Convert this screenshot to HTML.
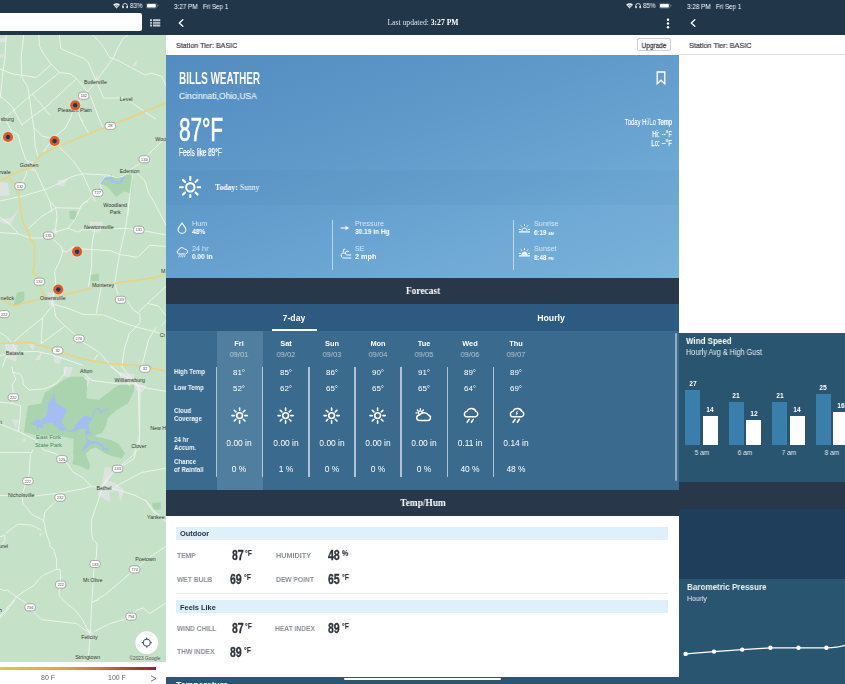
<!DOCTYPE html>
<html><head><meta charset="utf-8"><style>
html,body{margin:0;padding:0;width:845px;height:684px;overflow:hidden;background:#fff;}
.t{position:absolute;line-height:normal;white-space:nowrap;will-change:transform;}
.r{position:absolute;}
svg{position:absolute;}
</style></head><body>
<div class="r" style="left:0.00px;top:0.00px;width:845.00px;height:35.00px;background:#22364a;"></div>
<div class="r" style="left:0.00px;top:35.00px;width:166.00px;height:627.00px;background:#c5e1c7;"></div>
<svg style="left:0;top:35px" width="166" height="627" viewBox="0 35 166 627"><polygon points="26.7,160.5 33,161 35.2,171.4 28,170" fill="#dde3df"/><polygon points="0,182 8,183 9.7,195.7 0,196" fill="#dde3df"/><polygon points="58,180 68,178.7 64,186 58,186" fill="#dde3df"/><polygon points="0,38 6.7,38 6.7,42.3 0,42.3" fill="#dde3df"/><polygon points="0,54.4 3.6,54.4 3.6,57.5 0,57.5" fill="#dde3df"/><polygon points="131.5,66.6 137.6,59.3 136,66" fill="#dde3df"/><polygon points="94.5,80 97,73.8 97.5,80" fill="#dde3df"/><polygon points="19.4,208.3 10.9,218 0,219.2 0,222 9.7,225.3 13,220" fill="#dde3df"/><polygon points="52.2,229 57,229 57,233.8 52.2,233.8" fill="#dde3df"/><polygon points="89,221.6 103.6,222 100,232.6 92,232" fill="#dde3df"/><polygon points="63.1,367 72.8,367 70,376.7 64,376" fill="#dde3df"/><polygon points="47.3,292.5 54.6,292.5 54.6,305.8 49,305.8" fill="#dde3df"/><polygon points="4.9,343.5 18.2,345 16,361.7 6,358" fill="#dde3df"/><polygon points="27.9,343.5 35.2,345 33,350.7" fill="#dde3df"/><polygon points="34,360.5 42.5,350.7 40,360" fill="#dde3df"/><polygon points="53.4,355.6 61.9,357 60,364 54,363" fill="#dde3df"/><polygon points="71.6,343.5 76.5,337.4 76,343.5" fill="#dde3df"/><polygon points="104.8,467 112.1,468.2 107.3,480.3 114.6,482.8 124.3,490 120.6,502.2 118.2,491.3 109.7,491.3 109.7,502.2 97.6,494.9 102.4,481.6" fill="#dde3df"/><polygon points="119.4,371.9 134,374 134,384 121,382" fill="#dde3df"/><polygon points="134,382.8 147.3,386 142,392.5 136,390" fill="#dde3df"/><polygon points="84.2,376.7 90.3,378 88,386.4 84.2,385" fill="#dde3df"/><polygon points="10.9,419.2 19.4,420 16,427.7" fill="#dde3df"/><polygon points="21.8,438.6 26.7,438.6 24,442.2" fill="#dde3df"/><polygon points="38.8,533 43.7,533 40,536.6" fill="#dde3df"/><polygon points="90.4,628.5 94.3,635 90.4,641.3 86.4,635" fill="#dde3df"/><polygon fill="#a9d4ae" points="24.3,430.1 27.9,405.8 41.3,403.4 44.9,392.5 51,388.8 63.1,380.3 70.4,376.7 83,376.7 87,381 86.6,398.6 98.8,399.8 113.3,388.8 120.6,384 134,384 134,391.3 127.9,403.4 116.5,410 108.1,417.5 106.2,425 102.5,432.5 94.1,436.2 110.9,439.9 118.4,443.7 124.9,453 122.1,458.6 110.9,455.8 104.4,453 95.9,447.4 90.3,449.3 85.6,454 90.3,465.2 88.5,469.9 80,466.1 72.5,464.3 73.5,458.6 73.5,439 60.7,436 36.4,435 24.3,432.5"/><polygon points="69.2,211 76.5,210.7 76.5,219.2 70,219" fill="#a9d4ae"/><polygon points="90.3,275 98.8,273.8 98.8,281 91,281" fill="#a9d4ae"/><polygon points="13.3,305.8 17,292.5 24.3,291.3 24.3,300 19.4,304.6" fill="#a9d4ae"/><polygon points="152.2,503 160.7,502.2 160.7,509.5 153,510" fill="#a9d4ae"/><polygon points="72.8,450 83,450 83,465.8 76,462" fill="#a9d4ae"/><polygon fill="#a9d4ae" points="100.7,183.4 105.6,177.8 124,175.6 131.2,174.2 133.3,178.5 131.2,194 124,191.2 116.3,197 107.8,187"/><polygon fill="#a5bdf0" points="30.3,423.4 38.8,418.6 40,420.4 47.3,415.5 48.5,402.2 52.2,398.6 54,390 54.6,398.6 57,403.4 65.5,408.3 66.7,410.7 63.1,418 61.9,422.8 66,428.7 69.7,431.5 74.4,427.8 77.2,422.2 84.7,415.6 92.2,418.4 88.5,425 89.4,430.6 92.2,433.4 87.5,434.3 86.6,438.1 90.3,440.9 97.8,441.8 102.5,444.6 104.4,448.4 108.1,447.4 109,449.3 103.4,450.2 100.6,445.5 95,443.7 89.4,444.6 84.7,450.2 81.9,451.2 82.8,448.4 86.6,442.7 85.6,434.3 85.6,428.7 80,428.7 74.4,431.5 69.7,432.5 66,430 60.7,430.7 57,426.5 52.2,422.8 43.7,424 42.5,428.9 38.8,426.5 37.6,431.3 36.4,425.3 30.3,424"/><polyline fill="none" stroke="#a5bdf0" stroke-width="1.2" stroke-linejoin="round" points="91,419 94.1,412 95.1,409.5 98.8,408.9 101.2,413.1 104.8,409.5 108.5,408.9"/><polyline fill="none" stroke="#a5bdf0" stroke-width="2.4" stroke-linejoin="round" points="100.7,184.2 103.5,178.8 111.3,178.4 112,181.3 120.5,183.2 122,179.2 124.8,177.3"/><polyline fill="none" stroke="#a5bdf0" stroke-width="1.5" points="111.3,174.4 111.3,178.4"/><polyline fill="none" stroke="#f0f4f0" stroke-width="0.9" stroke-linejoin="round" stroke-linecap="round" points="92.7,35 98.8,41.1 103.6,47.1 109.7,57.5 119.4,61.1 131.5,67.8 144.9,75 151,73.2 161.9,76.3 166,86"/><polyline fill="none" stroke="#f0f4f0" stroke-width="0.9" stroke-linejoin="round" stroke-linecap="round" points="127.9,35 123,38.6 115.8,52 113.3,58 95.1,82.3 86.6,93.3 75,105 70.4,118 65.5,127.7 57,135 47.3,146 43.7,152"/><polyline fill="none" stroke="#f0f4f0" stroke-width="0.9" stroke-linejoin="round" stroke-linecap="round" points="59.5,35 60.7,48.3 68,52 83,58 87.9,61.7 96.3,81.1 103.6,98.1 114.6,98.1 123,97.5 131.5,102.4 146.1,112.7 156,119"/><polyline fill="none" stroke="#f0f4f0" stroke-width="0.9" stroke-linejoin="round" stroke-linecap="round" points="38.8,35 39.4,45.9 43.1,53.2 51,64.1 59.5,72.6 70.4,73.8 76.5,78.7 83,86 90.3,95.7 98.8,118 103,127.7"/><polyline fill="none" stroke="#f0f4f0" stroke-width="0.9" stroke-linejoin="round" stroke-linecap="round" points="23.7,35 21.2,56.8 21.8,77.5 27.9,87.2 30.3,103 32.2,118 34,127.7 35.2,145.9 37.6,155.6"/><polyline fill="none" stroke="#f0f4f0" stroke-width="0.9" stroke-linejoin="round" stroke-linecap="round" points="6.1,35 4.9,59.3 3,70.2 1.2,89.6 0,98"/><polyline fill="none" stroke="#f0f4f0" stroke-width="0.9" stroke-linejoin="round" stroke-linecap="round" points="4.9,118 10.9,130.1 18.2,135 20.6,144.7 25.5,159.3 27.9,161.7"/><polyline fill="none" stroke="#f0f4f0" stroke-width="0.9" stroke-linejoin="round" stroke-linecap="round" points="0,122 4.9,118 30.3,95.7 59.5,72.6"/><polyline fill="none" stroke="#f0f4f0" stroke-width="0.9" stroke-linejoin="round" stroke-linecap="round" points="22,125 30.3,118 45,107.8 76.5,78.7"/><polyline fill="none" stroke="#f0f4f0" stroke-width="0.9" stroke-linejoin="round" stroke-linecap="round" points="0,69 12.1,73.8 36.4,77.5 51,64.7"/><polyline fill="none" stroke="#f0f4f0" stroke-width="0.9" stroke-linejoin="round" stroke-linecap="round" points="32.8,94.5 43.7,107.8 50,115"/><polyline fill="none" stroke="#f0f4f0" stroke-width="0.9" stroke-linejoin="round" stroke-linecap="round" points="0,95.7 12.1,106.6 18.2,118 22,125"/><polyline fill="none" stroke="#f0f4f0" stroke-width="0.9" stroke-linejoin="round" stroke-linecap="round" points="34,127.7 42.5,136.2 52.2,138.6"/><polyline fill="none" stroke="#f0f4f0" stroke-width="0.9" stroke-linejoin="round" stroke-linecap="round" points="75,105 83,124 89,133.8"/><polyline fill="none" stroke="#f0f4f0" stroke-width="0.9" stroke-linejoin="round" stroke-linecap="round" points="59.5,147.1 72.8,160.5 83,175 91.5,193.2 95,201"/><polyline fill="none" stroke="#f0f4f0" stroke-width="0.9" stroke-linejoin="round" stroke-linecap="round" points="80.1,118 83,121.6"/><polyline fill="none" stroke="#f0f4f0" stroke-width="0.9" stroke-linejoin="round" stroke-linecap="round" points="26.7,171.4 25.5,176.3 21.8,183.5"/><polyline fill="none" stroke="#f0f4f0" stroke-width="0.9" stroke-linejoin="round" stroke-linecap="round" points="35.2,170.2 38.8,177.5 42.5,186 46.1,193.2 49.8,201 52,212"/><polyline fill="none" stroke="#f0f4f0" stroke-width="0.9" stroke-linejoin="round" stroke-linecap="round" points="0,201 24.3,195.7 48.5,188.4 72.8,176.3 83,173.8 107.3,175 117,177.5 123,176.3 131.5,169 138.8,164.1 148.5,154.4 160.7,142.3 166,138.6"/><polyline fill="none" stroke="#f0f4f0" stroke-width="0.9" stroke-linejoin="round" stroke-linecap="round" points="132.8,175 131.5,183.5 129.1,201 128,215"/><polyline fill="none" stroke="#f0f4f0" stroke-width="0.9" stroke-linejoin="round" stroke-linecap="round" points="136.4,172.6 144.9,181.1 148.5,193.2 153.4,201 166,225.3"/><polyline fill="none" stroke="#f0f4f0" stroke-width="0.9" stroke-linejoin="round" stroke-linecap="round" points="104.8,176.3 100,183.5 101.2,188.4 86.6,201 80,207"/><polyline fill="none" stroke="#f0f4f0" stroke-width="0.9" stroke-linejoin="round" stroke-linecap="round" points="0,232.6 18.2,233.8 30.3,238 43.7,238 53.4,232.6 68,228.3 77.7,232 83,229.8 125.5,228.3 143.7,230.7 166,235"/><polyline fill="none" stroke="#f0f4f0" stroke-width="0.9" stroke-linejoin="round" stroke-linecap="round" points="0,216.8 9.7,224.1 18.2,233.2"/><polyline fill="none" stroke="#f0f4f0" stroke-width="0.9" stroke-linejoin="round" stroke-linecap="round" points="27.9,228.9 41.3,216.8 55.8,207.7 80.1,208.3 83,203.4 87.9,201"/><polyline fill="none" stroke="#f0f4f0" stroke-width="0.9" stroke-linejoin="round" stroke-linecap="round" points="49.8,201 55.8,207.7 57,216.8 55.2,231.3"/><polyline fill="none" stroke="#f0f4f0" stroke-width="0.9" stroke-linejoin="round" stroke-linecap="round" points="80.1,208.3 75.2,219.2 68,228.3"/><polyline fill="none" stroke="#f0f4f0" stroke-width="0.9" stroke-linejoin="round" stroke-linecap="round" points="52.2,238.6 61.9,247.1 61.9,250.8 66.7,252 72.8,247.1"/><polyline fill="none" stroke="#f0f4f0" stroke-width="0.9" stroke-linejoin="round" stroke-linecap="round" points="63.1,250.8 59.5,261.7 54.6,271.4 55.8,284 52.2,301 52.2,305.8 42.5,318 24.3,332.5 12.1,343.5"/><polyline fill="none" stroke="#f0f4f0" stroke-width="0.9" stroke-linejoin="round" stroke-linecap="round" points="129.1,201 125.5,228.9 119.4,254.4 114.6,284 118.2,294.9 127.9,301 132.8,309.5 140,314.3 140,322.8 129.1,333.8 124.3,349.5 121.8,367 133,380 138.3,386.8 139.6,437.8 133.5,454.8 114,471.8 104.4,484"/><polyline fill="none" stroke="#f0f4f0" stroke-width="0.9" stroke-linejoin="round" stroke-linecap="round" points="72.8,247.1 83,249 110.9,250.8 119.4,254.4 137.6,257.4 149.7,245.3 166,246.5"/><polyline fill="none" stroke="#f0f4f0" stroke-width="0.9" stroke-linejoin="round" stroke-linecap="round" points="94.5,231.3 92.1,243.5 91.5,267.7 88.5,286"/><polyline fill="none" stroke="#f0f4f0" stroke-width="0.9" stroke-linejoin="round" stroke-linecap="round" points="101.2,287.6 96.3,313.1"/><polyline fill="none" stroke="#f0f4f0" stroke-width="0.9" stroke-linejoin="round" stroke-linecap="round" points="83,314.3 103.6,315 117,320.4 136.4,327.1 153.4,331.3 166,335"/><polyline fill="none" stroke="#f0f4f0" stroke-width="0.9" stroke-linejoin="round" stroke-linecap="round" points="54.6,304.6 68,308.3 83,314.3"/><polyline fill="none" stroke="#f0f4f0" stroke-width="0.9" stroke-linejoin="round" stroke-linecap="round" points="53.4,304.6 55.8,316.8 64.3,325.3 75.2,335 83,342.3 98.8,352 109.7,364.1 121,376 130,386"/><polyline fill="none" stroke="#f0f4f0" stroke-width="0.9" stroke-linejoin="round" stroke-linecap="round" points="42.5,318 41.3,343.5"/><polyline fill="none" stroke="#f0f4f0" stroke-width="0.9" stroke-linejoin="round" stroke-linecap="round" points="41.3,343.5 64.3,326.5"/><polyline fill="none" stroke="#f0f4f0" stroke-width="0.9" stroke-linejoin="round" stroke-linecap="round" points="0,332.5 7.3,337.4 13.3,344.7 15.8,349.5 6.1,356.8 2.4,367"/><polyline fill="none" stroke="#f0f4f0" stroke-width="0.9" stroke-linejoin="round" stroke-linecap="round" points="0,355.6 15.8,352 36.4,351.4 51,354.4 83,365.3"/><polyline fill="none" stroke="#f0f4f0" stroke-width="0.9" stroke-linejoin="round" stroke-linecap="round" points="138.8,311.9 147.3,303.4 166,286.4"/><polyline fill="none" stroke="#f0f4f0" stroke-width="0.9" stroke-linejoin="round" stroke-linecap="round" points="147.3,303.4 158.2,305.8 166,315.6"/><polyline fill="none" stroke="#f0f4f0" stroke-width="0.9" stroke-linejoin="round" stroke-linecap="round" points="155.8,327.7 148.5,339.8 143.7,359.2 141.3,367"/><polyline fill="none" stroke="#f0f4f0" stroke-width="0.9" stroke-linejoin="round" stroke-linecap="round" points="93.9,360.5 97.6,354.4"/><polyline fill="none" stroke="#f0f4f0" stroke-width="0.9" stroke-linejoin="round" stroke-linecap="round" points="161.9,325.3 166,320.4"/><polyline fill="none" stroke="#f0f4f0" stroke-width="0.9" stroke-linejoin="round" stroke-linecap="round" points="12.1,367 12.7,371.9 15.8,379.1 12.1,385.2 13.3,393.7 12.7,403.4 20.6,405.8 20,419.2 18.2,431.3"/><polyline fill="none" stroke="#f0f4f0" stroke-width="0.9" stroke-linejoin="round" stroke-linecap="round" points="0,402.2 12.7,403.4"/><polyline fill="none" stroke="#f0f4f0" stroke-width="0.9" stroke-linejoin="round" stroke-linecap="round" points="12.7,371.9 20.6,374.3 23.1,380.3 23.1,384 29.1,390 44.9,388.8 55.8,384 64.3,374.3 65.5,367"/><polyline fill="none" stroke="#f0f4f0" stroke-width="0.9" stroke-linejoin="round" stroke-linecap="round" points="0,424 18.2,431.3 35.2,439.8 43.7,450 55.8,453.6 65.5,460.9 72.8,471.8 83,477.9 91.5,486.4 103.9,488 113.3,488.8 134,494.9 146.1,501 152.2,510.7 166,521.6"/><polyline fill="none" stroke="#f0f4f0" stroke-width="0.9" stroke-linejoin="round" stroke-linecap="round" points="83,488.8 91.5,486.4"/><polyline fill="none" stroke="#f0f4f0" stroke-width="0.9" stroke-linejoin="round" stroke-linecap="round" points="83,371.9 91.5,380.3 119.4,384 134,384 147.3,388.2 166,391.3"/><polyline fill="none" stroke="#f0f4f0" stroke-width="0.9" stroke-linejoin="round" stroke-linecap="round" points="111,367 121.8,374.3 135.2,381.6 140,390 139.4,439.8 138.8,450"/><polyline fill="none" stroke="#f0f4f0" stroke-width="0.9" stroke-linejoin="round" stroke-linecap="round" points="136.4,450 134,458.5 123,465.8 112.1,471.8 103.6,484 98.8,498.5 91.5,520.4 91.5,533 92.7,539.1 97,543.9 96.3,557.3 93.9,569.4 92.7,587.6 91.5,605.8 91.4,611.8 90.4,629.5 89.4,645.2 88.4,657 82.5,662"/><polyline fill="none" stroke="#f0f4f0" stroke-width="0.9" stroke-linejoin="round" stroke-linecap="round" points="115.8,486.4 141.3,472.5 166,468.2"/><polyline fill="none" stroke="#f0f4f0" stroke-width="0.9" stroke-linejoin="round" stroke-linecap="round" points="32.8,450 30.3,454.9 29.1,474.3 25.5,485.2 21.8,494.9 23.1,503.4 31.6,514.3 43.7,520.4 46.1,533 49.8,542.7 49.8,546.3 53.4,548.8 56.4,558.5 56.4,569.4 60.1,569.4 60.7,581.5 58.9,592.5 59.5,596.1 68,604.6 74.7,609.8 82.5,619.6 86.4,627.5 89.4,632.4"/><polyline fill="none" stroke="#f0f4f0" stroke-width="0.9" stroke-linejoin="round" stroke-linecap="round" points="0,495.5 36.4,495.9 63.1,492.5 83,488.8"/><polyline fill="none" stroke="#f0f4f0" stroke-width="0.9" stroke-linejoin="round" stroke-linecap="round" points="55.8,501 44.9,511.9 43.7,520.4"/><polyline fill="none" stroke="#f0f4f0" stroke-width="0.9" stroke-linejoin="round" stroke-linecap="round" points="0,452.4 30.3,452.4"/><polyline fill="none" stroke="#f0f4f0" stroke-width="0.9" stroke-linejoin="round" stroke-linecap="round" points="6.1,533 18.2,524 31.6,525.2 41.3,530.1"/><polyline fill="none" stroke="#f0f4f0" stroke-width="0.9" stroke-linejoin="round" stroke-linecap="round" points="0,536.6 4.9,535.4 4.9,540.3 2.4,544"/><polyline fill="none" stroke="#f0f4f0" stroke-width="0.9" stroke-linejoin="round" stroke-linecap="round" points="56.4,569.4 42.5,575.5 34,585.2 17,596.1 4.9,610.7 0,616"/><polyline fill="none" stroke="#f0f4f0" stroke-width="0.9" stroke-linejoin="round" stroke-linecap="round" points="0,588.8 3.6,590.6 7.3,590 17,597.3 30.3,605.8 33.4,611.8 41.3,619.6 58.9,621.6 76.6,623.6 84.5,629.5 89.4,632.4"/><polyline fill="none" stroke="#f0f4f0" stroke-width="0.9" stroke-linejoin="round" stroke-linecap="round" points="92.7,602.2 104.8,594.9 129.1,574.3 151,556.1 153.4,554.8 166,546.3"/><polyline fill="none" stroke="#f0f4f0" stroke-width="0.9" stroke-linejoin="round" stroke-linecap="round" points="94.3,631.4 110,623.6 123.8,619.6 137.5,609.8 143.4,607.9 149.3,613.8 166,602.9"/><polyline fill="none" stroke="#f0f4f0" stroke-width="0.9" stroke-linejoin="round" stroke-linecap="round" points="14.7,600 5.9,611.8 0,617.7"/><polyline fill="none" stroke="#f0f4f0" stroke-width="0.9" stroke-linejoin="round" stroke-linecap="round" points="92.3,602 98.2,600"/><polyline fill="none" stroke="#f0f4f0" stroke-width="0.9" stroke-linejoin="round" stroke-linecap="round" points="145.6,500 155.3,512 166,521.8"/><polyline fill="none" stroke="#eed17c" stroke-width="1.35" stroke-linejoin="round" points="166,103 129,118 83,136.2 59.5,146 41.3,154.4 36.4,160.5 31.6,167.8 18.2,171.4 8.5,176.3 0,181.1"/><polyline fill="none" stroke="#eed17c" stroke-width="1.35" stroke-linejoin="round" points="8.5,176.3 12.1,181.1 17,186 18.8,193.2 19.4,201 21.2,213.1 23.1,222.8 29.1,232.6 29.7,238.6 34.6,243.5 34.6,264.1 32.8,272.6 37.6,276.2 38.8,284 42.5,292.5 46.1,297.3"/><polyline fill="none" stroke="#eed17c" stroke-width="1.35" stroke-linejoin="round" points="0,299 4.9,301 13.3,305.8 36.4,299.8 51,298.6 68,293.7 83,290.7 95,286.8 107.3,284.3 155.8,277.5 166,273.8"/><polyline fill="none" stroke="#eed17c" stroke-width="1.35" stroke-linejoin="round" points="0,343.5 30.3,342.3 53.4,349.5 83,359.2 107.3,363.5 134,365.3 146.1,367 166,371"/><rect x="78.5" y="92.2" width="10.4" height="7" rx="2.8" fill="#fff" stroke="#7a7a7a" stroke-width="0.6"/><text x="83.7" y="97.3" font-family="Liberation Sans" font-size="4.4" fill="#444" text-anchor="middle" transform="translate(83.7 0) scale(0.9 1) translate(-83.7 0)">132</text><rect x="105.1" y="122.4" width="10.4" height="7" rx="2.8" fill="#fff" stroke="#7a7a7a" stroke-width="0.6"/><text x="110.3" y="127.5" font-family="Liberation Sans" font-size="4.4" fill="#444" text-anchor="middle" transform="translate(110.3 0) scale(0.9 1) translate(-110.3 0)">28</text><rect x="139.1" y="155.8" width="10.4" height="7" rx="2.8" fill="#fff" stroke="#7a7a7a" stroke-width="0.6"/><text x="144.3" y="160.9" font-family="Liberation Sans" font-size="4.4" fill="#444" text-anchor="middle" transform="translate(144.3 0) scale(0.9 1) translate(-144.3 0)">133</text><rect x="14.8" y="182.7" width="10.4" height="7" rx="2.8" fill="#fff" stroke="#7a7a7a" stroke-width="0.6"/><text x="20.0" y="187.8" font-family="Liberation Sans" font-size="4.4" fill="#444" text-anchor="middle" transform="translate(20.0 0) scale(0.9 1) translate(-20.0 0)">132</text><rect x="92.4" y="189.4" width="10.4" height="7" rx="2.8" fill="#fff" stroke="#7a7a7a" stroke-width="0.6"/><text x="97.6" y="194.5" font-family="Liberation Sans" font-size="4.4" fill="#444" text-anchor="middle" transform="translate(97.6 0) scale(0.9 1) translate(-97.6 0)">727</text><rect x="43.3" y="232.1" width="10.4" height="7" rx="2.8" fill="#fff" stroke="#7a7a7a" stroke-width="0.6"/><text x="48.5" y="237.2" font-family="Liberation Sans" font-size="4.4" fill="#444" text-anchor="middle" transform="translate(48.5 0) scale(0.9 1) translate(-48.5 0)">131</text><rect x="133.6" y="226.3" width="10.4" height="7" rx="2.8" fill="#fff" stroke="#7a7a7a" stroke-width="0.6"/><text x="138.8" y="231.4" font-family="Liberation Sans" font-size="4.4" fill="#444" text-anchor="middle" transform="translate(138.8 0) scale(0.9 1) translate(-138.8 0)">131</text><rect x="34.2" y="278.2" width="10.4" height="7" rx="2.8" fill="#fff" stroke="#7a7a7a" stroke-width="0.6"/><text x="39.4" y="283.3" font-family="Liberation Sans" font-size="4.4" fill="#444" text-anchor="middle" transform="translate(39.4 0) scale(0.9 1) translate(-39.4 0)">132</text><rect x="115.4" y="296.3" width="10.4" height="7" rx="2.8" fill="#fff" stroke="#7a7a7a" stroke-width="0.6"/><text x="120.6" y="301.4" font-family="Liberation Sans" font-size="4.4" fill="#444" text-anchor="middle" transform="translate(120.6 0) scale(0.9 1) translate(-120.6 0)">133</text><rect x="-1.0" y="310.6" width="10.4" height="7" rx="2.8" fill="#fff" stroke="#7a7a7a" stroke-width="0.6"/><text x="4.2" y="315.7" font-family="Liberation Sans" font-size="4.4" fill="#444" text-anchor="middle" transform="translate(4.2 0) scale(0.9 1) translate(-4.2 0)">222</text><rect x="73.7" y="335.1" width="10.4" height="7" rx="2.8" fill="#fff" stroke="#7a7a7a" stroke-width="0.6"/><text x="78.9" y="340.2" font-family="Liberation Sans" font-size="4.4" fill="#444" text-anchor="middle" transform="translate(78.9 0) scale(0.9 1) translate(-78.9 0)">276</text><rect x="52.4" y="347.0" width="10.4" height="7" rx="2.8" fill="#fff" stroke="#7a7a7a" stroke-width="0.6"/><text x="57.6" y="352.1" font-family="Liberation Sans" font-size="4.4" fill="#444" text-anchor="middle" transform="translate(57.6 0) scale(0.9 1) translate(-57.6 0)">32</text><rect x="8.1" y="393.8" width="10.4" height="7" rx="2.8" fill="#fff" stroke="#7a7a7a" stroke-width="0.6"/><text x="13.3" y="398.9" font-family="Liberation Sans" font-size="4.4" fill="#444" text-anchor="middle" transform="translate(13.3 0) scale(0.9 1) translate(-13.3 0)">222</text><rect x="139.7" y="365.3" width="10.4" height="7" rx="2.8" fill="#fff" stroke="#7a7a7a" stroke-width="0.6"/><text x="144.9" y="370.4" font-family="Liberation Sans" font-size="4.4" fill="#444" text-anchor="middle" transform="translate(144.9 0) scale(0.9 1) translate(-144.9 0)">32</text><rect x="56.7" y="455.6" width="10.4" height="7" rx="2.8" fill="#fff" stroke="#7a7a7a" stroke-width="0.6"/><text x="61.9" y="460.7" font-family="Liberation Sans" font-size="4.4" fill="#444" text-anchor="middle" transform="translate(61.9 0) scale(0.9 1) translate(-61.9 0)">125</text><rect x="112.4" y="465.3" width="10.4" height="7" rx="2.8" fill="#fff" stroke="#7a7a7a" stroke-width="0.6"/><text x="117.6" y="470.4" font-family="Liberation Sans" font-size="4.4" fill="#444" text-anchor="middle" transform="translate(117.6 0) scale(0.9 1) translate(-117.6 0)">133</text><rect x="22.7" y="477.5" width="10.4" height="7" rx="2.8" fill="#fff" stroke="#7a7a7a" stroke-width="0.6"/><text x="27.9" y="482.6" font-family="Liberation Sans" font-size="4.4" fill="#444" text-anchor="middle" transform="translate(27.9 0) scale(0.9 1) translate(-27.9 0)">222</text><rect x="54.9" y="494.1" width="10.4" height="7" rx="2.8" fill="#fff" stroke="#7a7a7a" stroke-width="0.6"/><text x="60.1" y="499.2" font-family="Liberation Sans" font-size="4.4" fill="#444" text-anchor="middle" transform="translate(60.1 0) scale(0.9 1) translate(-60.1 0)">232</text><rect x="89.9" y="560.5" width="10.4" height="7" rx="2.8" fill="#fff" stroke="#7a7a7a" stroke-width="0.6"/><text x="95.1" y="565.6" font-family="Liberation Sans" font-size="4.4" fill="#444" text-anchor="middle" transform="translate(95.1 0) scale(0.9 1) translate(-95.1 0)">133</text><rect x="129.4" y="565.9" width="10.4" height="7" rx="2.8" fill="#fff" stroke="#7a7a7a" stroke-width="0.6"/><text x="134.6" y="571.0" font-family="Liberation Sans" font-size="4.4" fill="#444" text-anchor="middle" transform="translate(134.6 0) scale(0.9 1) translate(-134.6 0)">774</text><rect x="55.5" y="581.1" width="10.4" height="7" rx="2.8" fill="#fff" stroke="#7a7a7a" stroke-width="0.6"/><text x="60.7" y="586.2" font-family="Liberation Sans" font-size="4.4" fill="#444" text-anchor="middle" transform="translate(60.7 0) scale(0.9 1) translate(-60.7 0)">222</text><rect x="24.9" y="603.8" width="10.4" height="7" rx="2.8" fill="#fff" stroke="#7a7a7a" stroke-width="0.6"/><text x="30.1" y="608.9" font-family="Liberation Sans" font-size="4.4" fill="#444" text-anchor="middle" transform="translate(30.1 0) scale(0.9 1) translate(-30.1 0)">756</text><rect x="125.9" y="613.1" width="10.4" height="7" rx="2.8" fill="#fff" stroke="#7a7a7a" stroke-width="0.6"/><text x="131.1" y="618.2" font-family="Liberation Sans" font-size="4.4" fill="#444" text-anchor="middle" transform="translate(131.1 0) scale(0.9 1) translate(-131.1 0)">756</text><text x="95.4" y="84.1" font-family="Liberation Sans" font-size="5.3" fill="#353535" text-anchor="middle" stroke="#c5e1c7" stroke-width="1.2" stroke-opacity="0.55" paint-order="stroke">Butlerville</text><text x="126.2" y="101.1" font-family="Liberation Sans" font-size="5.3" fill="#353535" text-anchor="middle" stroke="#c5e1c7" stroke-width="1.2" stroke-opacity="0.55" paint-order="stroke">Level</text><text x="74.8" y="111.6" font-family="Liberation Sans" font-size="5.3" fill="#353535" text-anchor="middle" stroke="#c5e1c7" stroke-width="1.2" stroke-opacity="0.55" paint-order="stroke">Pleasant Plain</text><text x="7.3" y="120.5" font-family="Liberation Sans" font-size="5.3" fill="#353535" text-anchor="middle" stroke="#c5e1c7" stroke-width="1.2" stroke-opacity="0.55" paint-order="stroke">sburg</text><text x="29.1" y="166.9" font-family="Liberation Sans" font-size="5.3" fill="#353535" text-anchor="middle" stroke="#c5e1c7" stroke-width="1.2" stroke-opacity="0.55" paint-order="stroke">Goshen</text><text x="4.9" y="174.4" font-family="Liberation Sans" font-size="5.3" fill="#353535" text-anchor="middle" stroke="#c5e1c7" stroke-width="1.2" stroke-opacity="0.55" paint-order="stroke">rvale</text><text x="129.7" y="173.0" font-family="Liberation Sans" font-size="5.3" fill="#353535" text-anchor="middle" stroke="#c5e1c7" stroke-width="1.2" stroke-opacity="0.55" paint-order="stroke">Edenton</text><text x="160.7" y="141.2" font-family="Liberation Sans" font-size="5.3" fill="#353535" text-anchor="middle" stroke="#c5e1c7" stroke-width="1.2" stroke-opacity="0.55" paint-order="stroke">Woo</text><text x="115.2" y="207.0" font-family="Liberation Sans" font-size="5.3" fill="#353535" text-anchor="middle" stroke="#c5e1c7" stroke-width="1.2" stroke-opacity="0.55" paint-order="stroke">Woodland</text><text x="115.2" y="214.0" font-family="Liberation Sans" font-size="5.3" fill="#353535" text-anchor="middle" stroke="#c5e1c7" stroke-width="1.2" stroke-opacity="0.55" paint-order="stroke">Park</text><text x="98.8" y="228.9" font-family="Liberation Sans" font-size="5.3" fill="#353535" text-anchor="middle" stroke="#c5e1c7" stroke-width="1.2" stroke-opacity="0.55" paint-order="stroke">Newtonsville</text><text x="103.0" y="286.8" font-family="Liberation Sans" font-size="5.3" fill="#353535" text-anchor="middle" stroke="#c5e1c7" stroke-width="1.2" stroke-opacity="0.55" paint-order="stroke">Monterey</text><text x="52.8" y="299.8" font-family="Liberation Sans" font-size="5.3" fill="#353535" text-anchor="middle" stroke="#c5e1c7" stroke-width="1.2" stroke-opacity="0.55" paint-order="stroke">Owensville</text><text x="7.3" y="299.8" font-family="Liberation Sans" font-size="5.3" fill="#353535" text-anchor="middle" stroke="#c5e1c7" stroke-width="1.2" stroke-opacity="0.55" paint-order="stroke">nelick</text><text x="14.6" y="354.7" font-family="Liberation Sans" font-size="5.3" fill="#353535" text-anchor="middle" stroke="#c5e1c7" stroke-width="1.2" stroke-opacity="0.55" paint-order="stroke">Batavia</text><text x="162.5" y="336.8" font-family="Liberation Sans" font-size="5.3" fill="#353535" text-anchor="middle" stroke="#c5e1c7" stroke-width="1.2" stroke-opacity="0.55" paint-order="stroke">Cr</text><text x="163.1" y="272.9" font-family="Liberation Sans" font-size="5.3" fill="#353535" text-anchor="middle" stroke="#c5e1c7" stroke-width="1.2" stroke-opacity="0.55" paint-order="stroke">M</text><text x="86.2" y="372.8" font-family="Liberation Sans" font-size="5.3" fill="#353535" text-anchor="middle" stroke="#c5e1c7" stroke-width="1.2" stroke-opacity="0.55" paint-order="stroke">Afton</text><text x="129.7" y="381.9" font-family="Liberation Sans" font-size="5.3" fill="#353535" text-anchor="middle" stroke="#c5e1c7" stroke-width="1.2" stroke-opacity="0.55" paint-order="stroke">Williamsburg</text><text x="158.2" y="430.1" font-family="Liberation Sans" font-size="5.3" fill="#353535" text-anchor="middle" stroke="#c5e1c7" stroke-width="1.2" stroke-opacity="0.55" paint-order="stroke">New H</text><text x="138.8" y="447.9" font-family="Liberation Sans" font-size="5.3" fill="#353535" text-anchor="middle" stroke="#c5e1c7" stroke-width="1.2" stroke-opacity="0.55" paint-order="stroke">Clover</text><text x="103.9" y="490.0" font-family="Liberation Sans" font-size="5.3" fill="#353535" text-anchor="middle" stroke="#c5e1c7" stroke-width="1.2" stroke-opacity="0.55" paint-order="stroke">Bethel</text><text x="21.2" y="496.7" font-family="Liberation Sans" font-size="5.3" fill="#353535" text-anchor="middle" stroke="#c5e1c7" stroke-width="1.2" stroke-opacity="0.55" paint-order="stroke">Nicholsville</text><text x="155.8" y="518.5" font-family="Liberation Sans" font-size="5.3" fill="#353535" text-anchor="middle" stroke="#c5e1c7" stroke-width="1.2" stroke-opacity="0.55" paint-order="stroke">Yankee</text><text x="1.2" y="424.0" font-family="Liberation Sans" font-size="5.3" fill="#353535" text-anchor="middle" stroke="#c5e1c7" stroke-width="1.2" stroke-opacity="0.55" paint-order="stroke">t</text><text x="3.6" y="547.5" font-family="Liberation Sans" font-size="5.3" fill="#353535" text-anchor="middle" stroke="#c5e1c7" stroke-width="1.2" stroke-opacity="0.55" paint-order="stroke">urel</text><text x="145.5" y="560.9" font-family="Liberation Sans" font-size="5.3" fill="#353535" text-anchor="middle" stroke="#c5e1c7" stroke-width="1.2" stroke-opacity="0.55" paint-order="stroke">Poetown</text><text x="92.7" y="581.9" font-family="Liberation Sans" font-size="5.3" fill="#353535" text-anchor="middle" stroke="#c5e1c7" stroke-width="1.2" stroke-opacity="0.55" paint-order="stroke">Mt Olive</text><text x="89.4" y="638.7" font-family="Liberation Sans" font-size="5.3" fill="#353535" text-anchor="middle" stroke="#c5e1c7" stroke-width="1.2" stroke-opacity="0.55" paint-order="stroke">Felicity</text><text x="87.8" y="658.8" font-family="Liberation Sans" font-size="5.3" fill="#353535" text-anchor="middle" stroke="#c5e1c7" stroke-width="1.2" stroke-opacity="0.55" paint-order="stroke">Stringtown</text><text x="0.5" y="611.8" font-family="Liberation Sans" font-size="5.3" fill="#353535" text-anchor="middle" stroke="#c5e1c7" stroke-width="1.2" stroke-opacity="0.55" paint-order="stroke">h</text><text x="48.5" y="438.6" font-family="Liberation Sans" font-size="5.8" fill="#4a8a5e" text-anchor="middle" stroke="#c5e1c7" stroke-width="1.2" stroke-opacity="0.55" paint-order="stroke">East Fork</text><text x="48.5" y="447.1" font-family="Liberation Sans" font-size="5.8" fill="#4a8a5e" text-anchor="middle" stroke="#c5e1c7" stroke-width="1.2" stroke-opacity="0.55" paint-order="stroke">State Park</text><text x="145.0" y="660.1" font-family="Liberation Sans" font-size="4.8" fill="#555" text-anchor="middle" stroke="#c5e1c7" stroke-width="1.2" stroke-opacity="0.55" paint-order="stroke">&#169;2023 Google</text><circle cx="75.2" cy="105.3" r="5.6" fill="#f4f4f4" opacity="0.6"/><circle cx="75.2" cy="105.3" r="5.1" fill="#dd5a2b"/><circle cx="75.2" cy="105.3" r="2.2" fill="#1e3a55"/><circle cx="8.0" cy="137.0" r="5.6" fill="#f4f4f4" opacity="0.6"/><circle cx="8.0" cy="137.0" r="5.1" fill="#dd5a2b"/><circle cx="8.0" cy="137.0" r="2.2" fill="#1e3a55"/><circle cx="54.6" cy="141.0" r="5.6" fill="#f4f4f4" opacity="0.6"/><circle cx="54.6" cy="141.0" r="5.1" fill="#dd5a2b"/><circle cx="54.6" cy="141.0" r="2.2" fill="#1e3a55"/><circle cx="77.1" cy="251.7" r="5.6" fill="#f4f4f4" opacity="0.6"/><circle cx="77.1" cy="251.7" r="5.1" fill="#dd5a2b"/><circle cx="77.1" cy="251.7" r="2.2" fill="#1e3a55"/><circle cx="58.3" cy="289.5" r="5.6" fill="#f4f4f4" opacity="0.6"/><circle cx="58.3" cy="289.5" r="5.1" fill="#dd5a2b"/><circle cx="58.3" cy="289.5" r="2.2" fill="#1e3a55"/><circle cx="146.8" cy="642.7" r="11.4" fill="#fff"/><circle cx="146.8" cy="642.7" r="3.6" fill="none" stroke="#2d3e50" stroke-width="0.9"/><path d="M146.8 637.6 V639.6 M146.8 645.8 V647.8 M141.7 642.7 H143.7 M149.9 642.7 H151.9" stroke="#2d3e50" stroke-width="0.9"/></svg>
<div class="r" style="left:0.00px;top:662.00px;width:166.00px;height:22.00px;background:#fff;"></div>
<div class="r" style="left:0.00px;top:667.00px;width:156.00px;height:3.00px;background:linear-gradient(90deg,#e3c445 0%,#e5a43f 40%,#dd7a3c 60%,#b84a30 80%,#8a2626 100%);"></div>
<div class="t" style="left:41.20px;top:673.80px;font-family:'Liberation Sans', sans-serif;font-size:6.98px;font-weight:400;color:#666;">80 F</div>
<div class="t" style="left:107.60px;top:673.80px;font-family:'Liberation Sans', sans-serif;font-size:6.98px;font-weight:400;color:#666;">100 F</div>
<svg style="left:149.5px;top:674.5px" width="7" height="7" viewBox="0 0 7 7"><path d="M1 0.8 L6 3.5 L1 6.2" stroke="#666" stroke-width="0.9" fill="none"/></svg>
<div class="r" style="left:-4.00px;top:12.90px;width:145.80px;height:17.80px;background:#fff;border-radius:2px;"></div>
<svg style="left:150px;top:19px" width="11" height="8" viewBox="0 0 11 8"><g fill="#c3cad1"><rect x="0" y="0.2" width="2" height="2"/><rect x="0" y="3.1" width="2" height="1.6"/><rect x="0" y="5.5" width="2" height="2"/><rect x="3" y="0.2" width="7.3" height="2"/><rect x="3" y="3.1" width="7.3" height="1.6"/><rect x="3" y="5.5" width="7.3" height="2"/></g></svg>
<svg style="left:113.2px;top:3.3px" width="7.2" height="5.6" viewBox="0 0 14 11"><path d="M7 10.6 L0.2 3.4 A9.8 9.8 0 0 1 13.8 3.4 Z" fill="#fff" opacity="0.95"/><path d="M2.6 6 A6.4 6.4 0 0 1 11.4 6" stroke="#22364a" stroke-width="1.1" fill="none"/><path d="M4.8 8.3 A3.4 3.4 0 0 1 9.2 8.3" stroke="#22364a" stroke-width="1.1" fill="none"/></svg>
<svg style="left:122.3px;top:3.4px" width="6.2" height="5.4" viewBox="0 0 12 11"><path d="M1.3 8 V5.6 A4.7 4.7 0 0 1 10.7 5.6 V8" stroke="#fff" stroke-width="1.5" fill="none"/><rect x="0.3" y="6.3" width="3" height="4.5" rx="1" fill="#fff"/><rect x="8.7" y="6.3" width="3" height="4.5" rx="1" fill="#fff"/></svg>
<div class="t" style="left:130.30px;top:2.30px;font-family:'Liberation Sans', sans-serif;font-size:6.83px;font-weight:400;color:#f4f6f8;transform:scaleX(0.930);transform-origin:left top;">83%</div>
<svg style="left:145.7px;top:3.4px" width="13.2" height="5.4" viewBox="0 0 26.4 10.8"><rect x="0.6" y="0.6" width="21" height="9.6" rx="2.6" fill="none" stroke="#7d8a98" stroke-width="1.1"/><rect x="2" y="2" width="17.6" height="6.8" rx="1.3" fill="#fff"/><path d="M23 3.6 Q25 4 25 5.4 Q25 6.8 23 7.2 Z" fill="#7d8a98"/></svg>
<div class="t" style="left:174.00px;top:2.60px;font-family:'Liberation Sans', sans-serif;font-size:6.69px;font-weight:400;color:#fff;transform:scaleX(0.950);transform-origin:left top;">3:27 PM</div>
<div class="t" style="left:203.00px;top:2.60px;font-family:'Liberation Sans', sans-serif;font-size:6.69px;font-weight:400;color:#fff;transform:scaleX(0.930);transform-origin:left top;">Fri Sep 1</div>
<svg style="left:626.2px;top:3.3px" width="7.2" height="5.6" viewBox="0 0 14 11"><path d="M7 10.6 L0.2 3.4 A9.8 9.8 0 0 1 13.8 3.4 Z" fill="#fff" opacity="0.95"/><path d="M2.6 6 A6.4 6.4 0 0 1 11.4 6" stroke="#22364a" stroke-width="1.1" fill="none"/><path d="M4.8 8.3 A3.4 3.4 0 0 1 9.2 8.3" stroke="#22364a" stroke-width="1.1" fill="none"/></svg>
<svg style="left:635.3px;top:3.4px" width="6.2" height="5.4" viewBox="0 0 12 11"><path d="M1.3 8 V5.6 A4.7 4.7 0 0 1 10.7 5.6 V8" stroke="#fff" stroke-width="1.5" fill="none"/><rect x="0.3" y="6.3" width="3" height="4.5" rx="1" fill="#fff"/><rect x="8.7" y="6.3" width="3" height="4.5" rx="1" fill="#fff"/></svg>
<div class="t" style="left:643.30px;top:2.30px;font-family:'Liberation Sans', sans-serif;font-size:6.83px;font-weight:400;color:#f4f6f8;transform:scaleX(0.930);transform-origin:left top;">85%</div>
<svg style="left:658.7px;top:3.4px" width="13.2" height="5.4" viewBox="0 0 26.4 10.8"><rect x="0.6" y="0.6" width="21" height="9.6" rx="2.6" fill="none" stroke="#7d8a98" stroke-width="1.1"/><rect x="2" y="2" width="17.6" height="6.8" rx="1.3" fill="#fff"/><path d="M23 3.6 Q25 4 25 5.4 Q25 6.8 23 7.2 Z" fill="#7d8a98"/></svg>
<svg style="left:177.5px;top:18.7px" width="6" height="8" viewBox="0 0 6 8"><path d="M4.8 0.8 L1.3 4 L4.8 7.2" stroke="#fff" stroke-width="1.3" fill="none" stroke-linecap="round" stroke-linejoin="round"/></svg>
<div class="t" style="left:422.5px;top:17.5px;font-family:'Liberation Serif', serif;font-size:7.65px;color:#dfe3e8;transform:translateX(-50%);">Last updated: <b style="color:#fff">3:27 PM</b></div>
<svg style="left:666px;top:17.5px" width="4" height="11" viewBox="0 0 4 11"><g fill="#fff"><circle cx="2" cy="1.8" r="1.2"/><circle cx="2" cy="5.5" r="1.2"/><circle cx="2" cy="9.2" r="1.2"/></g></svg>
<div class="r" style="left:166.00px;top:35.00px;width:513.00px;height:20.00px;background:#fff;"></div>
<div class="t" style="left:176.40px;top:40.70px;font-family:'Liberation Sans', sans-serif;font-size:7.70px;font-weight:400;color:#3a3a3a;transform:scaleX(0.925);transform-origin:left top;-webkit-text-stroke:0.2px #3a3a3a;">Station Tier: BASIC</div>
<div class="r" style="left:636.60px;top:38.30px;width:34.80px;height:13.00px;background:#fff;box-sizing:border-box;border:1px solid #cfcfcf;border-radius:2px;"></div>
<div class="t" style="left:653.80px;top:41.20px;font-family:'Liberation Sans', sans-serif;font-size:7.27px;font-weight:400;color:#4a4a4a;transform:translateX(-50%) scaleX(0.890);transform-origin:center top;-webkit-text-stroke:0.3px #4a4a4a;">Upgrade</div>
<div class="r" style="left:166.00px;top:55.00px;width:513.00px;height:222.50px;background:linear-gradient(160deg,#538cc0 0%,#5f9acb 40%,#6fa9d5 75%,#78b3da 100%);"></div>
<div class="r" style="left:166.00px;top:170.00px;width:513.00px;height:34.50px;background:rgba(40,90,140,0.05);"></div>
<div class="t" style="left:178.50px;top:68.60px;font-family:'Liberation Sans', sans-serif;font-size:16.86px;font-weight:700;color:#fff;transform:scaleX(0.590);transform-origin:left top;">BILLS WEATHER</div>
<div class="t" style="left:178.50px;top:91.20px;font-family:'Liberation Sans', sans-serif;font-size:9.30px;font-weight:400;color:#eaf1f8;transform:scaleX(0.920);transform-origin:left top;-webkit-text-stroke:0.15px #eaf1f8;">Cincinnati,Ohio,USA</div>
<div class="t" style="left:178.50px;top:111.00px;font-family:'Liberation Sans', sans-serif;font-size:32.70px;font-weight:400;color:#fff;transform:scaleX(0.635);transform-origin:left top;-webkit-text-stroke:0.7px #fff;">87&deg;F</div>
<div class="t" style="left:178.50px;top:147.00px;font-family:'Liberation Sans', sans-serif;font-size:10.17px;font-weight:400;color:#fff;transform:scaleX(0.636);transform-origin:left top;-webkit-text-stroke:0.25px #fff;">Feels like 89&deg;F</div>
<svg style="left:656px;top:70.5px" width="10" height="14" viewBox="0 0 10 14"><path d="M1.2 1 H8.8 V12.8 L5 9.2 L1.2 12.8 Z" stroke="#fff" stroke-width="1.3" fill="none" stroke-linejoin="miter"/></svg>
<div class="t" style="left:672.00px;top:115.90px;font-family:'Liberation Sans', sans-serif;font-size:9.45px;font-weight:400;color:#fff;transform:translateX(-100%) scaleX(0.628);transform-origin:right top;-webkit-text-stroke:0.2px #fff;">Today Hi/Lo Temp</div>
<div class="t" style="left:672.00px;top:129.90px;font-family:'Liberation Sans', sans-serif;font-size:8.14px;font-weight:400;color:#fff;transform:translateX(-100%) scaleX(0.680);transform-origin:right top;letter-spacing:0.40px;-webkit-text-stroke:0.25px #fff;">Hi: --&deg;F</div>
<div class="t" style="left:672.00px;top:139.30px;font-family:'Liberation Sans', sans-serif;font-size:8.14px;font-weight:400;color:#fff;transform:translateX(-100%) scaleX(0.680);transform-origin:right top;letter-spacing:0.40px;-webkit-text-stroke:0.25px #fff;">Lo: --&deg;F</div>
<svg style="left:178.7px;top:176.0px" width="22" height="22" viewBox="178.7 176.0 22 22"><circle cx="190.00" cy="187.30" r="4.20" stroke="#fff" stroke-width="2.10" fill="none"/><line x1="197.40" y1="187.30" x2="200.30" y2="187.30" stroke="#fff" stroke-width="2.10" stroke-linecap="round"/><line x1="195.23" y1="192.53" x2="197.28" y2="194.58" stroke="#fff" stroke-width="2.10" stroke-linecap="round"/><line x1="190.00" y1="194.70" x2="190.00" y2="197.60" stroke="#fff" stroke-width="2.10" stroke-linecap="round"/><line x1="184.77" y1="192.53" x2="182.72" y2="194.58" stroke="#fff" stroke-width="2.10" stroke-linecap="round"/><line x1="182.60" y1="187.30" x2="179.70" y2="187.30" stroke="#fff" stroke-width="2.10" stroke-linecap="round"/><line x1="184.77" y1="182.07" x2="182.72" y2="180.02" stroke="#fff" stroke-width="2.10" stroke-linecap="round"/><line x1="190.00" y1="179.90" x2="190.00" y2="177.00" stroke="#fff" stroke-width="2.10" stroke-linecap="round"/><line x1="195.23" y1="182.07" x2="197.28" y2="180.02" stroke="#fff" stroke-width="2.10" stroke-linecap="round"/></svg>
<div class="t" style="left:215.00px;top:183.30px;font-family:'Liberation Serif', serif;font-size:8.09px;font-weight:700;color:#fff;transform:scaleX(0.955);transform-origin:left top;">Today: <span style="font-weight:400">Sunny</span></div>
<div class="r" style="left:331.50px;top:220.00px;width:1.00px;height:50.00px;background:rgba(255,255,255,0.55);"></div>
<div class="r" style="left:512.50px;top:220.00px;width:1.00px;height:50.00px;background:rgba(255,255,255,0.55);"></div>
<div class="t" style="left:192.00px;top:219.00px;font-family:'Liberation Sans', sans-serif;font-size:7.27px;font-weight:400;color:rgba(255,255,255,0.72);">Hum</div>
<div class="t" style="left:192.00px;top:226.80px;font-family:'Liberation Sans', sans-serif;font-size:7.27px;font-weight:700;color:#fff;transform:scaleX(0.920);transform-origin:left top;">48%</div>
<div class="t" style="left:192.00px;top:243.80px;font-family:'Liberation Sans', sans-serif;font-size:7.27px;font-weight:400;color:rgba(255,255,255,0.72);">24 hr</div>
<div class="t" style="left:192.00px;top:251.60px;font-family:'Liberation Sans', sans-serif;font-size:7.27px;font-weight:700;color:#fff;transform:scaleX(0.900);transform-origin:left top;">0.00 in</div>
<div class="t" style="left:355.00px;top:219.00px;font-family:'Liberation Sans', sans-serif;font-size:7.27px;font-weight:400;color:rgba(255,255,255,0.72);">Pressure</div>
<div class="t" style="left:355.00px;top:226.80px;font-family:'Liberation Sans', sans-serif;font-size:7.27px;font-weight:700;color:#fff;transform:scaleX(0.900);transform-origin:left top;">30.19 in Hg</div>
<div class="t" style="left:355.00px;top:243.80px;font-family:'Liberation Sans', sans-serif;font-size:7.27px;font-weight:400;color:rgba(255,255,255,0.72);">SE</div>
<div class="t" style="left:355.00px;top:251.60px;font-family:'Liberation Sans', sans-serif;font-size:7.27px;font-weight:700;color:#fff;">2 mph</div>
<div class="t" style="left:534.00px;top:219.00px;font-family:'Liberation Sans', sans-serif;font-size:7.27px;font-weight:400;color:rgba(255,255,255,0.72);">Sunrise</div>
<div class="t" style="left:534px;top:227.7px;font-family:'Liberation Sans', sans-serif;font-size:7.3px;font-weight:700;color:#fff;transform:scaleX(0.85);transform-origin:left top">6:19 <span style="font-size:4.3px">AM</span></div>
<div class="t" style="left:534.00px;top:243.80px;font-family:'Liberation Sans', sans-serif;font-size:7.27px;font-weight:400;color:rgba(255,255,255,0.72);">Sunset</div>
<div class="t" style="left:534px;top:252.5px;font-family:'Liberation Sans', sans-serif;font-size:7.3px;font-weight:700;color:#fff;transform:scaleX(0.85);transform-origin:left top">8:48 <span style="font-size:4.3px">PM</span></div>
<svg style="left:177px;top:221.8px" width="11" height="13" viewBox="0 0 11 13"><path d="M5 0.9 C3.6 3.6 1.1 5.6 1.1 7.4 A3.9 3.9 0 0 0 8.9 7.4 C8.9 5.6 6.4 3.6 5 0.9 Z" stroke="#fff" stroke-width="1.05" fill="none"/></svg>
<svg style="left:176px;top:247.2px" width="13" height="11" viewBox="0 0 13 11"><path d="M2.8 7 A2.1 2.1 0 0 1 3 2.9 A3 3 0 0 1 8.6 2.3 A2.3 2.3 0 0 1 9.6 7 Z" stroke="#fff" stroke-width="1" fill="none"/><path d="M3.6 8.2 L2.7 10.3 M5.4 8.2 L4.5 10.3 M7.2 8.2 L6.3 10.3 M9 8.2 L8.1 10.3" stroke="#fff" stroke-width="0.75"/></svg>
<svg style="left:340px;top:225px" width="10" height="6" viewBox="0 0 10 6"><path d="M0.5 3 H6" stroke="#fff" stroke-width="1"/><path d="M5.5 0.8 L9 3 L5.5 5.2 Z" fill="#fff"/></svg>
<svg style="left:339.8px;top:247.9px" width="12" height="11" viewBox="0 0 12 11"><g stroke="#fff" stroke-width="0.95" fill="none" stroke-linecap="round"><path d="M5.2 5.3 A2.6 2.6 0 1 0 3.9 10 H10.8"/><path d="M8.6 3.4 A2 2 0 1 0 7.2 7 H10.8"/><path d="M3.4 3.8 V2.2 A1.1 1.1 0 0 1 4.9 1.2"/></g></svg>
<svg style="left:519.0px;top:223.5px" width="12" height="10" viewBox="0 0 12 10"><g stroke="#fff" stroke-width="0.9" stroke-linecap="round"><path d="M2.9 6.6 A2.6 2.6 0 0 1 8.1 6.6 " fill="none"/><path d="M5.5 0.5 V1.8 M2.2 1.7 L3 2.6 M8.8 1.7 L8 2.6 M0.5 5.4 H1.6 M9.4 5.4 H10.5" /><path d="M0.5 7.9 H10.5" stroke-width="1.1"/></g></svg>
<svg style="left:519.0px;top:248.3px" width="12" height="10" viewBox="0 0 12 10"><g stroke="#fff" stroke-width="0.9" stroke-linecap="round"><path d="M2.9 6.6 A2.6 2.6 0 0 1 8.1 6.6 Z" fill="#fff"/><path d="M5.5 0.5 V1.8 M2.2 1.7 L3 2.6 M8.8 1.7 L8 2.6 M0.5 5.4 H1.6 M9.4 5.4 H10.5" /><path d="M0.5 7.9 H10.5" stroke-width="1.1"/></g></svg>
<div class="r" style="left:166.00px;top:277.50px;width:513.00px;height:26.50px;background:#28384a;"></div>
<div class="t" style="left:422.50px;top:285.30px;font-family:'Liberation Serif', serif;font-size:10.08px;font-weight:700;color:#fff;transform:translateX(-50%) scaleX(0.930);transform-origin:center top;">Forecast</div>
<div class="r" style="left:166.00px;top:304.00px;width:513.00px;height:26.50px;background:#2c5a80;"></div>
<div class="t" style="left:294.20px;top:313.00px;font-family:'Liberation Sans', sans-serif;font-size:8.72px;font-weight:700;color:#fff;transform:translateX(-50%);transform-origin:center top;">7-day</div>
<div class="r" style="left:271.60px;top:329.20px;width:45.30px;height:1.40px;background:#fff;"></div>
<div class="t" style="left:550.50px;top:313.00px;font-family:'Liberation Sans', sans-serif;font-size:8.72px;font-weight:700;color:#fff;transform:translateX(-50%);transform-origin:center top;">Hourly</div>
<div class="r" style="left:166.00px;top:330.50px;width:513.00px;height:159.50px;background:#3a6a8e;"></div>
<div class="r" style="left:216.50px;top:330.50px;width:46.00px;height:159.50px;background:#507e9e;"></div>
<div class="r" style="left:216.00px;top:367.40px;width:1.40px;height:109.50px;background:rgba(255,255,255,0.6);"></div>
<div class="t" style="left:239.40px;top:339.30px;font-family:'Liberation Sans', sans-serif;font-size:7.41px;font-weight:700;color:#fff;transform:translateX(-50%);transform-origin:center top;">Fri</div>
<div class="t" style="left:239.40px;top:350.10px;font-family:'Liberation Sans', sans-serif;font-size:7.85px;font-weight:400;color:rgba(255,255,255,0.6);transform:translateX(-50%) scaleX(0.950);transform-origin:center top;">09/01</div>
<div class="t" style="left:239.40px;top:367.90px;font-family:'Liberation Sans', sans-serif;font-size:7.99px;font-weight:400;color:#fff;transform:translateX(-50%);transform-origin:center top;">81&deg;</div>
<div class="t" style="left:239.40px;top:384.30px;font-family:'Liberation Sans', sans-serif;font-size:7.99px;font-weight:400;color:#fff;transform:translateX(-50%);transform-origin:center top;">52&deg;</div>
<div class="t" style="left:239.40px;top:437.60px;font-family:'Liberation Sans', sans-serif;font-size:8.43px;font-weight:400;color:#fff;transform:translateX(-50%);transform-origin:center top;">0.00 in</div>
<div class="t" style="left:239.40px;top:463.80px;font-family:'Liberation Sans', sans-serif;font-size:8.43px;font-weight:400;color:#fff;transform:translateX(-50%);transform-origin:center top;">0 %</div>
<svg style="left:230.6px;top:406.9px" width="17" height="17" viewBox="230.6 406.9 17 17"><circle cx="239.20" cy="415.50" r="2.90" stroke="#fff" stroke-width="1.60" fill="none"/><line x1="244.40" y1="415.50" x2="246.80" y2="415.50" stroke="#fff" stroke-width="1.60" stroke-linecap="round"/><line x1="242.88" y1="419.18" x2="244.57" y2="420.87" stroke="#fff" stroke-width="1.60" stroke-linecap="round"/><line x1="239.20" y1="420.70" x2="239.20" y2="423.10" stroke="#fff" stroke-width="1.60" stroke-linecap="round"/><line x1="235.52" y1="419.18" x2="233.83" y2="420.87" stroke="#fff" stroke-width="1.60" stroke-linecap="round"/><line x1="234.00" y1="415.50" x2="231.60" y2="415.50" stroke="#fff" stroke-width="1.60" stroke-linecap="round"/><line x1="235.52" y1="411.82" x2="233.83" y2="410.13" stroke="#fff" stroke-width="1.60" stroke-linecap="round"/><line x1="239.20" y1="410.30" x2="239.20" y2="407.90" stroke="#fff" stroke-width="1.60" stroke-linecap="round"/><line x1="242.88" y1="411.82" x2="244.57" y2="410.13" stroke="#fff" stroke-width="1.60" stroke-linecap="round"/></svg>
<div class="r" style="left:262.10px;top:367.40px;width:1.40px;height:109.50px;background:rgba(255,255,255,0.6);"></div>
<div class="t" style="left:285.50px;top:339.30px;font-family:'Liberation Sans', sans-serif;font-size:7.41px;font-weight:700;color:#fff;transform:translateX(-50%);transform-origin:center top;">Sat</div>
<div class="t" style="left:285.50px;top:350.10px;font-family:'Liberation Sans', sans-serif;font-size:7.85px;font-weight:400;color:rgba(255,255,255,0.6);transform:translateX(-50%) scaleX(0.950);transform-origin:center top;">09/02</div>
<div class="t" style="left:285.50px;top:367.90px;font-family:'Liberation Sans', sans-serif;font-size:7.99px;font-weight:400;color:#fff;transform:translateX(-50%);transform-origin:center top;">85&deg;</div>
<div class="t" style="left:285.50px;top:384.30px;font-family:'Liberation Sans', sans-serif;font-size:7.99px;font-weight:400;color:#fff;transform:translateX(-50%);transform-origin:center top;">62&deg;</div>
<div class="t" style="left:285.50px;top:437.60px;font-family:'Liberation Sans', sans-serif;font-size:8.43px;font-weight:400;color:#fff;transform:translateX(-50%);transform-origin:center top;">0.00 in</div>
<div class="t" style="left:285.50px;top:463.80px;font-family:'Liberation Sans', sans-serif;font-size:8.43px;font-weight:400;color:#fff;transform:translateX(-50%);transform-origin:center top;">1 %</div>
<svg style="left:276.7px;top:406.9px" width="17" height="17" viewBox="276.7 406.9 17 17"><circle cx="285.30" cy="415.50" r="2.90" stroke="#fff" stroke-width="1.60" fill="none"/><line x1="290.50" y1="415.50" x2="292.90" y2="415.50" stroke="#fff" stroke-width="1.60" stroke-linecap="round"/><line x1="288.98" y1="419.18" x2="290.67" y2="420.87" stroke="#fff" stroke-width="1.60" stroke-linecap="round"/><line x1="285.30" y1="420.70" x2="285.30" y2="423.10" stroke="#fff" stroke-width="1.60" stroke-linecap="round"/><line x1="281.62" y1="419.18" x2="279.93" y2="420.87" stroke="#fff" stroke-width="1.60" stroke-linecap="round"/><line x1="280.10" y1="415.50" x2="277.70" y2="415.50" stroke="#fff" stroke-width="1.60" stroke-linecap="round"/><line x1="281.62" y1="411.82" x2="279.93" y2="410.13" stroke="#fff" stroke-width="1.60" stroke-linecap="round"/><line x1="285.30" y1="410.30" x2="285.30" y2="407.90" stroke="#fff" stroke-width="1.60" stroke-linecap="round"/><line x1="288.98" y1="411.82" x2="290.67" y2="410.13" stroke="#fff" stroke-width="1.60" stroke-linecap="round"/></svg>
<div class="r" style="left:308.20px;top:367.40px;width:1.40px;height:109.50px;background:rgba(255,255,255,0.6);"></div>
<div class="t" style="left:331.60px;top:339.30px;font-family:'Liberation Sans', sans-serif;font-size:7.41px;font-weight:700;color:#fff;transform:translateX(-50%);transform-origin:center top;">Sun</div>
<div class="t" style="left:331.60px;top:350.10px;font-family:'Liberation Sans', sans-serif;font-size:7.85px;font-weight:400;color:rgba(255,255,255,0.6);transform:translateX(-50%) scaleX(0.950);transform-origin:center top;">09/03</div>
<div class="t" style="left:331.60px;top:367.90px;font-family:'Liberation Sans', sans-serif;font-size:7.99px;font-weight:400;color:#fff;transform:translateX(-50%);transform-origin:center top;">86&deg;</div>
<div class="t" style="left:331.60px;top:384.30px;font-family:'Liberation Sans', sans-serif;font-size:7.99px;font-weight:400;color:#fff;transform:translateX(-50%);transform-origin:center top;">65&deg;</div>
<div class="t" style="left:331.60px;top:437.60px;font-family:'Liberation Sans', sans-serif;font-size:8.43px;font-weight:400;color:#fff;transform:translateX(-50%);transform-origin:center top;">0.00 in</div>
<div class="t" style="left:331.60px;top:463.80px;font-family:'Liberation Sans', sans-serif;font-size:8.43px;font-weight:400;color:#fff;transform:translateX(-50%);transform-origin:center top;">0 %</div>
<svg style="left:322.8px;top:406.9px" width="17" height="17" viewBox="322.8 406.9 17 17"><circle cx="331.40" cy="415.50" r="2.90" stroke="#fff" stroke-width="1.60" fill="none"/><line x1="336.60" y1="415.50" x2="339.00" y2="415.50" stroke="#fff" stroke-width="1.60" stroke-linecap="round"/><line x1="335.08" y1="419.18" x2="336.77" y2="420.87" stroke="#fff" stroke-width="1.60" stroke-linecap="round"/><line x1="331.40" y1="420.70" x2="331.40" y2="423.10" stroke="#fff" stroke-width="1.60" stroke-linecap="round"/><line x1="327.72" y1="419.18" x2="326.03" y2="420.87" stroke="#fff" stroke-width="1.60" stroke-linecap="round"/><line x1="326.20" y1="415.50" x2="323.80" y2="415.50" stroke="#fff" stroke-width="1.60" stroke-linecap="round"/><line x1="327.72" y1="411.82" x2="326.03" y2="410.13" stroke="#fff" stroke-width="1.60" stroke-linecap="round"/><line x1="331.40" y1="410.30" x2="331.40" y2="407.90" stroke="#fff" stroke-width="1.60" stroke-linecap="round"/><line x1="335.08" y1="411.82" x2="336.77" y2="410.13" stroke="#fff" stroke-width="1.60" stroke-linecap="round"/></svg>
<div class="r" style="left:354.30px;top:367.40px;width:1.40px;height:109.50px;background:rgba(255,255,255,0.6);"></div>
<div class="t" style="left:377.70px;top:339.30px;font-family:'Liberation Sans', sans-serif;font-size:7.41px;font-weight:700;color:#fff;transform:translateX(-50%);transform-origin:center top;">Mon</div>
<div class="t" style="left:377.70px;top:350.10px;font-family:'Liberation Sans', sans-serif;font-size:7.85px;font-weight:400;color:rgba(255,255,255,0.6);transform:translateX(-50%) scaleX(0.950);transform-origin:center top;">09/04</div>
<div class="t" style="left:377.70px;top:367.90px;font-family:'Liberation Sans', sans-serif;font-size:7.99px;font-weight:400;color:#fff;transform:translateX(-50%);transform-origin:center top;">90&deg;</div>
<div class="t" style="left:377.70px;top:384.30px;font-family:'Liberation Sans', sans-serif;font-size:7.99px;font-weight:400;color:#fff;transform:translateX(-50%);transform-origin:center top;">65&deg;</div>
<div class="t" style="left:377.70px;top:437.60px;font-family:'Liberation Sans', sans-serif;font-size:8.43px;font-weight:400;color:#fff;transform:translateX(-50%);transform-origin:center top;">0.00 in</div>
<div class="t" style="left:377.70px;top:463.80px;font-family:'Liberation Sans', sans-serif;font-size:8.43px;font-weight:400;color:#fff;transform:translateX(-50%);transform-origin:center top;">0 %</div>
<svg style="left:368.9px;top:406.9px" width="17" height="17" viewBox="368.9 406.9 17 17"><circle cx="377.50" cy="415.50" r="2.90" stroke="#fff" stroke-width="1.60" fill="none"/><line x1="382.70" y1="415.50" x2="385.10" y2="415.50" stroke="#fff" stroke-width="1.60" stroke-linecap="round"/><line x1="381.18" y1="419.18" x2="382.87" y2="420.87" stroke="#fff" stroke-width="1.60" stroke-linecap="round"/><line x1="377.50" y1="420.70" x2="377.50" y2="423.10" stroke="#fff" stroke-width="1.60" stroke-linecap="round"/><line x1="373.82" y1="419.18" x2="372.13" y2="420.87" stroke="#fff" stroke-width="1.60" stroke-linecap="round"/><line x1="372.30" y1="415.50" x2="369.90" y2="415.50" stroke="#fff" stroke-width="1.60" stroke-linecap="round"/><line x1="373.82" y1="411.82" x2="372.13" y2="410.13" stroke="#fff" stroke-width="1.60" stroke-linecap="round"/><line x1="377.50" y1="410.30" x2="377.50" y2="407.90" stroke="#fff" stroke-width="1.60" stroke-linecap="round"/><line x1="381.18" y1="411.82" x2="382.87" y2="410.13" stroke="#fff" stroke-width="1.60" stroke-linecap="round"/></svg>
<div class="r" style="left:400.40px;top:367.40px;width:1.40px;height:109.50px;background:rgba(255,255,255,0.6);"></div>
<div class="t" style="left:423.80px;top:339.30px;font-family:'Liberation Sans', sans-serif;font-size:7.41px;font-weight:700;color:#fff;transform:translateX(-50%);transform-origin:center top;">Tue</div>
<div class="t" style="left:423.80px;top:350.10px;font-family:'Liberation Sans', sans-serif;font-size:7.85px;font-weight:400;color:rgba(255,255,255,0.6);transform:translateX(-50%) scaleX(0.950);transform-origin:center top;">09/05</div>
<div class="t" style="left:423.80px;top:367.90px;font-family:'Liberation Sans', sans-serif;font-size:7.99px;font-weight:400;color:#fff;transform:translateX(-50%);transform-origin:center top;">91&deg;</div>
<div class="t" style="left:423.80px;top:384.30px;font-family:'Liberation Sans', sans-serif;font-size:7.99px;font-weight:400;color:#fff;transform:translateX(-50%);transform-origin:center top;">65&deg;</div>
<div class="t" style="left:423.80px;top:437.60px;font-family:'Liberation Sans', sans-serif;font-size:8.43px;font-weight:400;color:#fff;transform:translateX(-50%);transform-origin:center top;">0.00 in</div>
<div class="t" style="left:423.80px;top:463.80px;font-family:'Liberation Sans', sans-serif;font-size:8.43px;font-weight:400;color:#fff;transform:translateX(-50%);transform-origin:center top;">0 %</div>
<svg style="left:412.0px;top:402px" width="24" height="24" viewBox="0 0 24 24"><g stroke="#fff" stroke-width="1.3" stroke-linecap="round"><circle cx="8.3" cy="10.8" r="1.9" fill="none"/><path d="M8.4 6.6 V7.7 M5.3 8 L6 8.7 M11.4 8 L10.7 8.7 M4 10.9 H5.1"/><path d="M6.8 18.4 A2.8 2.8 0 0 1 7.6 12.9 A5.5 5.5 0 0 1 16.6 13.3 A2.6 2.6 0 0 1 15.8 18.4 Z" fill="#3a6a8e" stroke-width="1.5"/></g></svg>
<div class="r" style="left:446.50px;top:367.40px;width:1.40px;height:109.50px;background:rgba(255,255,255,0.6);"></div>
<div class="t" style="left:469.90px;top:339.30px;font-family:'Liberation Sans', sans-serif;font-size:7.41px;font-weight:700;color:#fff;transform:translateX(-50%);transform-origin:center top;">Wed</div>
<div class="t" style="left:469.90px;top:350.10px;font-family:'Liberation Sans', sans-serif;font-size:7.85px;font-weight:400;color:rgba(255,255,255,0.6);transform:translateX(-50%) scaleX(0.950);transform-origin:center top;">09/06</div>
<div class="t" style="left:469.90px;top:367.90px;font-family:'Liberation Sans', sans-serif;font-size:7.99px;font-weight:400;color:#fff;transform:translateX(-50%);transform-origin:center top;">89&deg;</div>
<div class="t" style="left:469.90px;top:384.30px;font-family:'Liberation Sans', sans-serif;font-size:7.99px;font-weight:400;color:#fff;transform:translateX(-50%);transform-origin:center top;">64&deg;</div>
<div class="t" style="left:469.90px;top:437.60px;font-family:'Liberation Sans', sans-serif;font-size:8.43px;font-weight:400;color:#fff;transform:translateX(-50%);transform-origin:center top;">0.11 in</div>
<div class="t" style="left:469.90px;top:463.80px;font-family:'Liberation Sans', sans-serif;font-size:8.43px;font-weight:400;color:#fff;transform:translateX(-50%);transform-origin:center top;">40 %</div>
<svg style="left:457.6px;top:402px" width="24" height="24" viewBox="0 0 24 24"><g stroke="#fff" stroke-width="1.5" stroke-linecap="round" fill="none"><path d="M7.9 14.8 A3 3 0 0 1 9 9.2 A5 5 0 0 1 17.9 9.4 A2.8 2.8 0 0 1 17.6 14.8 Z"/><path d="M11.2 17.3 L9.1 20.3 M15.4 17.3 L13.3 20.3"/></g></svg>
<div class="r" style="left:492.60px;top:367.40px;width:1.40px;height:109.50px;background:rgba(255,255,255,0.6);"></div>
<div class="t" style="left:516.00px;top:339.30px;font-family:'Liberation Sans', sans-serif;font-size:7.41px;font-weight:700;color:#fff;transform:translateX(-50%);transform-origin:center top;">Thu</div>
<div class="t" style="left:516.00px;top:350.10px;font-family:'Liberation Sans', sans-serif;font-size:7.85px;font-weight:400;color:rgba(255,255,255,0.6);transform:translateX(-50%) scaleX(0.950);transform-origin:center top;">09/07</div>
<div class="t" style="left:516.00px;top:367.90px;font-family:'Liberation Sans', sans-serif;font-size:7.99px;font-weight:400;color:#fff;transform:translateX(-50%);transform-origin:center top;">89&deg;</div>
<div class="t" style="left:516.00px;top:384.30px;font-family:'Liberation Sans', sans-serif;font-size:7.99px;font-weight:400;color:#fff;transform:translateX(-50%);transform-origin:center top;">69&deg;</div>
<div class="t" style="left:516.00px;top:437.60px;font-family:'Liberation Sans', sans-serif;font-size:8.43px;font-weight:400;color:#fff;transform:translateX(-50%);transform-origin:center top;">0.14 in</div>
<div class="t" style="left:516.00px;top:463.80px;font-family:'Liberation Sans', sans-serif;font-size:8.43px;font-weight:400;color:#fff;transform:translateX(-50%);transform-origin:center top;">48 %</div>
<svg style="left:503.7px;top:402px" width="24" height="24" viewBox="0 0 24 24"><g stroke="#fff" stroke-width="1.5" stroke-linecap="round" fill="none"><path d="M7.9 14.8 A3 3 0 0 1 9 9.2 A5 5 0 0 1 17.9 9.4 A2.8 2.8 0 0 1 17.6 14.8 Z"/><path d="M11.2 17.3 L9.1 20.3 M15.4 17.3 L13.3 20.3"/><path d="M13.4 9.2 L12.1 11.3 H13.6 L12.4 13" stroke-width="0.9"/></g></svg>
<div class="t" style="left:174.00px;top:368.30px;font-family:'Liberation Sans', sans-serif;font-size:7.12px;font-weight:700;color:#f2f6fa;transform:scaleX(0.860);transform-origin:left top;">High Temp</div>
<div class="t" style="left:174.00px;top:384.40px;font-family:'Liberation Sans', sans-serif;font-size:7.12px;font-weight:700;color:#f2f6fa;transform:scaleX(0.860);transform-origin:left top;">Low Temp</div>
<div class="t" style="left:174.00px;top:407.40px;font-family:'Liberation Sans', sans-serif;font-size:7.12px;font-weight:700;color:#f2f6fa;transform:scaleX(0.860);transform-origin:left top;">Cloud</div>
<div class="t" style="left:174.00px;top:415.40px;font-family:'Liberation Sans', sans-serif;font-size:7.12px;font-weight:700;color:#f2f6fa;transform:scaleX(0.860);transform-origin:left top;">Coverage</div>
<div class="t" style="left:174.00px;top:435.70px;font-family:'Liberation Sans', sans-serif;font-size:7.12px;font-weight:700;color:#f2f6fa;transform:scaleX(0.860);transform-origin:left top;">24 hr</div>
<div class="t" style="left:174.00px;top:443.90px;font-family:'Liberation Sans', sans-serif;font-size:7.12px;font-weight:700;color:#f2f6fa;transform:scaleX(0.860);transform-origin:left top;">Accum.</div>
<div class="t" style="left:174.00px;top:458.30px;font-family:'Liberation Sans', sans-serif;font-size:7.12px;font-weight:700;color:#f2f6fa;transform:scaleX(0.860);transform-origin:left top;">Chance</div>
<div class="t" style="left:174.00px;top:465.90px;font-family:'Liberation Sans', sans-serif;font-size:7.12px;font-weight:700;color:#f2f6fa;transform:scaleX(0.860);transform-origin:left top;">of Rainfall</div>
<div class="r" style="left:675.00px;top:333.00px;width:1.50px;height:148.00px;background:rgba(255,255,255,0.45);border-radius:1px;"></div>
<div class="r" style="left:166.00px;top:490.00px;width:513.00px;height:26.00px;background:#28384a;"></div>
<div class="t" style="left:422.50px;top:497.10px;font-family:'Liberation Serif', serif;font-size:10.08px;font-weight:700;color:#fff;transform:translateX(-50%) scaleX(0.930);transform-origin:center top;">Temp/Hum</div>
<div class="r" style="left:166.00px;top:516.00px;width:513.00px;height:160.50px;background:#fff;"></div>
<div class="r" style="left:176.20px;top:526.50px;width:492.00px;height:13.30px;background:#dff0fb;"></div>
<div class="t" style="left:180.00px;top:529.10px;font-family:'Liberation Sans', sans-serif;font-size:7.41px;font-weight:700;color:#1f2f3d;">Outdoor</div>
<div class="r" style="left:176.20px;top:593.00px;width:492.00px;height:0.80px;background:#ebebeb;"></div>
<div class="r" style="left:176.20px;top:600.30px;width:492.00px;height:12.70px;background:#dff0fb;"></div>
<div class="t" style="left:180.00px;top:602.60px;font-family:'Liberation Sans', sans-serif;font-size:7.41px;font-weight:700;color:#1f2f3d;">Feels Like</div>
<div class="t" style="left:176.70px;top:550.60px;font-family:'Liberation Sans', sans-serif;font-size:7.27px;font-weight:700;color:#8a8f95;transform:scaleX(0.920);transform-origin:left top;">TEMP</div>
<div class="t" style="left:231.60px;top:545.90px;font-family:'Liberation Sans', sans-serif;font-size:15.41px;font-weight:700;color:#2d333a;transform:scaleX(0.680);transform-origin:left top;-webkit-text-stroke:0.35px #2d333a;">87</div>
<div class="t" style="left:245.40px;top:547.00px;font-family:'Liberation Sans', sans-serif;font-size:9.59px;font-weight:700;color:#2d333a;transform:scaleX(0.720);transform-origin:left top;-webkit-text-stroke:0.15px #2d333a;">&deg;F</div>
<div class="t" style="left:276.20px;top:550.60px;font-family:'Liberation Sans', sans-serif;font-size:7.27px;font-weight:700;color:#8a8f95;">HUMIDITY</div>
<div class="t" style="left:328.00px;top:545.90px;font-family:'Liberation Sans', sans-serif;font-size:15.41px;font-weight:700;color:#2d333a;transform:scaleX(0.680);transform-origin:left top;-webkit-text-stroke:0.35px #2d333a;">48</div>
<div class="t" style="left:341.80px;top:547.00px;font-family:'Liberation Sans', sans-serif;font-size:9.59px;font-weight:700;color:#2d333a;transform:scaleX(0.720);transform-origin:left top;-webkit-text-stroke:0.15px #2d333a;">%</div>
<div class="t" style="left:176.70px;top:574.70px;font-family:'Liberation Sans', sans-serif;font-size:7.27px;font-weight:700;color:#8a8f95;transform:scaleX(0.920);transform-origin:left top;">WET BULB</div>
<div class="t" style="left:230.00px;top:570.00px;font-family:'Liberation Sans', sans-serif;font-size:15.41px;font-weight:700;color:#2d333a;transform:scaleX(0.680);transform-origin:left top;-webkit-text-stroke:0.35px #2d333a;">69</div>
<div class="t" style="left:243.80px;top:571.10px;font-family:'Liberation Sans', sans-serif;font-size:9.59px;font-weight:700;color:#2d333a;transform:scaleX(0.720);transform-origin:left top;-webkit-text-stroke:0.15px #2d333a;">&deg;F</div>
<div class="t" style="left:276.20px;top:574.70px;font-family:'Liberation Sans', sans-serif;font-size:7.27px;font-weight:700;color:#8a8f95;transform:scaleX(0.920);transform-origin:left top;">DEW POINT</div>
<div class="t" style="left:328.00px;top:570.00px;font-family:'Liberation Sans', sans-serif;font-size:15.41px;font-weight:700;color:#2d333a;transform:scaleX(0.680);transform-origin:left top;-webkit-text-stroke:0.35px #2d333a;">65</div>
<div class="t" style="left:341.80px;top:571.10px;font-family:'Liberation Sans', sans-serif;font-size:9.59px;font-weight:700;color:#2d333a;transform:scaleX(0.720);transform-origin:left top;-webkit-text-stroke:0.15px #2d333a;">&deg;F</div>
<div class="t" style="left:176.70px;top:623.80px;font-family:'Liberation Sans', sans-serif;font-size:7.27px;font-weight:700;color:#8a8f95;transform:scaleX(0.920);transform-origin:left top;">WIND CHILL</div>
<div class="t" style="left:231.60px;top:619.10px;font-family:'Liberation Sans', sans-serif;font-size:15.41px;font-weight:700;color:#2d333a;transform:scaleX(0.680);transform-origin:left top;-webkit-text-stroke:0.35px #2d333a;">87</div>
<div class="t" style="left:245.40px;top:620.20px;font-family:'Liberation Sans', sans-serif;font-size:9.59px;font-weight:700;color:#2d333a;transform:scaleX(0.720);transform-origin:left top;-webkit-text-stroke:0.15px #2d333a;">&deg;F</div>
<div class="t" style="left:275.00px;top:623.80px;font-family:'Liberation Sans', sans-serif;font-size:7.27px;font-weight:700;color:#8a8f95;transform:scaleX(0.920);transform-origin:left top;">HEAT INDEX</div>
<div class="t" style="left:328.00px;top:619.10px;font-family:'Liberation Sans', sans-serif;font-size:15.41px;font-weight:700;color:#2d333a;transform:scaleX(0.680);transform-origin:left top;-webkit-text-stroke:0.35px #2d333a;">89</div>
<div class="t" style="left:341.80px;top:620.20px;font-family:'Liberation Sans', sans-serif;font-size:9.59px;font-weight:700;color:#2d333a;transform:scaleX(0.720);transform-origin:left top;-webkit-text-stroke:0.15px #2d333a;">&deg;F</div>
<div class="t" style="left:176.70px;top:647.40px;font-family:'Liberation Sans', sans-serif;font-size:7.27px;font-weight:700;color:#8a8f95;transform:scaleX(0.920);transform-origin:left top;">THW INDEX</div>
<div class="t" style="left:230.00px;top:642.70px;font-family:'Liberation Sans', sans-serif;font-size:15.41px;font-weight:700;color:#2d333a;transform:scaleX(0.680);transform-origin:left top;-webkit-text-stroke:0.35px #2d333a;">89</div>
<div class="t" style="left:243.80px;top:643.80px;font-family:'Liberation Sans', sans-serif;font-size:9.59px;font-weight:700;color:#2d333a;transform:scaleX(0.720);transform-origin:left top;-webkit-text-stroke:0.15px #2d333a;">&deg;F</div>
<div class="r" style="left:166.00px;top:676.50px;width:513.00px;height:8.00px;background:#2a5674;"></div>
<div class="t" style="left:176.00px;top:680.00px;font-family:'Liberation Sans', sans-serif;font-size:8.72px;font-weight:700;color:#fff;">Temperature</div>
<div class="r" style="left:344.00px;top:677.60px;width:157.40px;height:2.20px;background:#fff;border-radius:1.1px;"></div>
<div class="r" style="left:679.00px;top:35.00px;width:166.00px;height:298.00px;background:#fff;"></div>
<div class="r" style="left:679.00px;top:54.20px;width:166.00px;height:0.90px;background:#dedede;"></div>
<div class="t" style="left:686.70px;top:2.60px;font-family:'Liberation Sans', sans-serif;font-size:6.69px;font-weight:400;color:#fff;transform:scaleX(0.950);transform-origin:left top;">3:28 PM</div>
<div class="t" style="left:716.00px;top:2.60px;font-family:'Liberation Sans', sans-serif;font-size:6.69px;font-weight:400;color:#fff;transform:scaleX(0.930);transform-origin:left top;">Fri Sep 1</div>
<svg style="left:689.8px;top:18.7px" width="6" height="8" viewBox="0 0 6 8"><path d="M4.8 0.8 L1.3 4 L4.8 7.2" stroke="#fff" stroke-width="1.3" fill="none" stroke-linecap="round" stroke-linejoin="round"/></svg>
<div class="t" style="left:688.70px;top:40.70px;font-family:'Liberation Sans', sans-serif;font-size:7.85px;font-weight:400;color:#3a3a3a;transform:scaleX(0.925);transform-origin:left top;-webkit-text-stroke:0.2px #3a3a3a;">Station Tier: BASIC</div>
<div class="r" style="left:679.00px;top:333.00px;width:166.00px;height:149.00px;background:#2a5570;"></div>
<div class="t" style="left:686.30px;top:335.80px;font-family:'Liberation Sans', sans-serif;font-size:8.87px;font-weight:700;color:#fff;transform:scaleX(0.900);transform-origin:left top;">Wind Speed</div>
<div class="t" style="left:686.30px;top:347.60px;font-family:'Liberation Sans', sans-serif;font-size:8.14px;font-weight:400;color:#e6edf2;transform:scaleX(0.890);transform-origin:left top;">Hourly Avg &amp; High Gust</div>
<div class="r" style="left:685.20px;top:390.16px;width:15.30px;height:54.54px;background:#3a7fab;"></div>
<div class="r" style="left:702.60px;top:416.42px;width:15.30px;height:28.28px;background:#fff;"></div>
<div class="t" style="left:692.80px;top:380.06px;font-family:'Liberation Sans', sans-serif;font-size:6.69px;font-weight:700;color:#fff;transform:translateX(-50%);transform-origin:center top;">27</div>
<div class="t" style="left:710.20px;top:406.32px;font-family:'Liberation Sans', sans-serif;font-size:6.69px;font-weight:700;color:#fff;transform:translateX(-50%);transform-origin:center top;">14</div>
<div class="t" style="left:701.60px;top:448.20px;font-family:'Liberation Sans', sans-serif;font-size:7.27px;font-weight:400;color:#e6edf2;transform:translateX(-50%) scaleX(0.900);transform-origin:center top;">5 am</div>
<div class="r" style="left:728.80px;top:402.28px;width:15.30px;height:42.42px;background:#3a7fab;"></div>
<div class="r" style="left:746.20px;top:420.46px;width:15.30px;height:24.24px;background:#fff;"></div>
<div class="t" style="left:736.40px;top:392.18px;font-family:'Liberation Sans', sans-serif;font-size:6.69px;font-weight:700;color:#fff;transform:translateX(-50%);transform-origin:center top;">21</div>
<div class="t" style="left:753.80px;top:410.36px;font-family:'Liberation Sans', sans-serif;font-size:6.69px;font-weight:700;color:#fff;transform:translateX(-50%);transform-origin:center top;">12</div>
<div class="t" style="left:745.20px;top:448.20px;font-family:'Liberation Sans', sans-serif;font-size:7.27px;font-weight:400;color:#e6edf2;transform:translateX(-50%) scaleX(0.900);transform-origin:center top;">6 am</div>
<div class="r" style="left:772.20px;top:402.28px;width:15.30px;height:42.42px;background:#3a7fab;"></div>
<div class="r" style="left:789.60px;top:416.42px;width:15.30px;height:28.28px;background:#fff;"></div>
<div class="t" style="left:779.80px;top:392.18px;font-family:'Liberation Sans', sans-serif;font-size:6.69px;font-weight:700;color:#fff;transform:translateX(-50%);transform-origin:center top;">21</div>
<div class="t" style="left:797.20px;top:406.32px;font-family:'Liberation Sans', sans-serif;font-size:6.69px;font-weight:700;color:#fff;transform:translateX(-50%);transform-origin:center top;">14</div>
<div class="t" style="left:788.60px;top:448.20px;font-family:'Liberation Sans', sans-serif;font-size:7.27px;font-weight:400;color:#e6edf2;transform:translateX(-50%) scaleX(0.900);transform-origin:center top;">7 am</div>
<div class="r" style="left:815.80px;top:394.20px;width:15.30px;height:50.50px;background:#3a7fab;"></div>
<div class="r" style="left:833.20px;top:412.38px;width:15.30px;height:32.32px;background:#fff;"></div>
<div class="t" style="left:823.40px;top:384.10px;font-family:'Liberation Sans', sans-serif;font-size:6.69px;font-weight:700;color:#fff;transform:translateX(-50%);transform-origin:center top;">25</div>
<div class="t" style="left:840.80px;top:402.28px;font-family:'Liberation Sans', sans-serif;font-size:6.69px;font-weight:700;color:#fff;transform:translateX(-50%);transform-origin:center top;">16</div>
<div class="t" style="left:832.20px;top:448.20px;font-family:'Liberation Sans', sans-serif;font-size:7.27px;font-weight:400;color:#e6edf2;transform:translateX(-50%) scaleX(0.900);transform-origin:center top;">8 am</div>
<div class="r" style="left:679.00px;top:482.00px;width:166.00px;height:27.00px;background:#28384a;"></div>
<div class="r" style="left:679.00px;top:509.00px;width:166.00px;height:69.50px;background:#1f3e5b;"></div>
<div class="r" style="left:679.00px;top:578.50px;width:166.00px;height:106.00px;background:#2a5570;"></div>
<div class="t" style="left:686.80px;top:582.40px;font-family:'Liberation Sans', sans-serif;font-size:9.30px;font-weight:700;color:#eef2f5;transform:scaleX(0.870);transform-origin:left top;">Barometric Pressure</div>
<div class="t" style="left:686.80px;top:594.30px;font-family:'Liberation Sans', sans-serif;font-size:7.27px;font-weight:400;color:#e6edf2;transform:scaleX(0.950);transform-origin:left top;">Hourly</div>
<svg style="left:0;top:0" width="845" height="684" viewBox="0 0 845 684"><path d="M685.6 653.9 L714.0 651.6 L742.2 649.6 L770.4 647.8 L798.5 647.8 L826.4 647.8 Q838 647.8 846 645" stroke="#fff" stroke-width="1.2" fill="none"/><circle cx="685.6" cy="653.9" r="2.2" fill="#fff"/><circle cx="714.0" cy="651.6" r="2.2" fill="#fff"/><circle cx="742.2" cy="649.6" r="2.2" fill="#fff"/><circle cx="770.4" cy="647.8" r="2.2" fill="#fff"/><circle cx="798.5" cy="647.8" r="2.2" fill="#fff"/><circle cx="826.4" cy="647.8" r="2.2" fill="#fff"/></svg>
<div class="r" style="left:675.00px;top:516.00px;width:4.00px;height:160.50px;background:#fff;"></div>
</body></html>
